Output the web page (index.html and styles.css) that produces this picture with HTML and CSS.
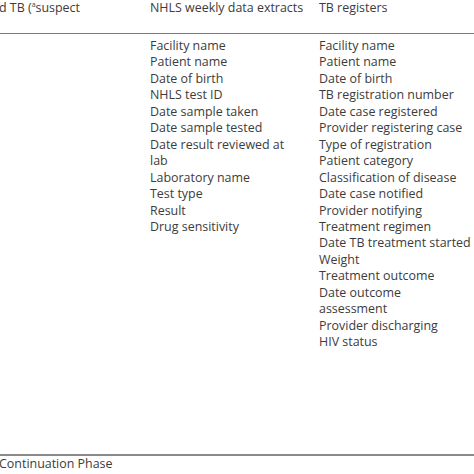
FILE: index.html
```html
<!DOCTYPE html>
<html>
<head>
<meta charset="utf-8">
<link rel="stylesheet" href="styles.css">
</head>
<body>
<div class="page">
  <div class="row head">
    <div class="cell first">d TB (<sup class="sup">a</sup>suspect</div>
    <div class="cell">NHLS weekly data extracts</div>
    <div class="cell">TB registers</div>
  </div>
  <div class="rule thin"></div>
  <div class="row body">
    <div class="cell first"></div>
    <div class="cell">
      <div class="item">Facility name</div>
      <div class="item">Patient name</div>
      <div class="item">Date of birth</div>
      <div class="item">NHLS test ID</div>
      <div class="item">Date sample taken</div>
      <div class="item">Date sample tested</div>
      <div class="item narrow">Date result reviewed at lab</div>
      <div class="item">Laboratory name</div>
      <div class="item">Test type</div>
      <div class="item">Result</div>
      <div class="item">Drug sensitivity</div>
    </div>
    <div class="cell">
      <div class="item">Facility name</div>
      <div class="item">Patient name</div>
      <div class="item">Date of birth</div>
      <div class="item">TB registration number</div>
      <div class="item">Date case registered</div>
      <div class="item">Provider registering case</div>
      <div class="item">Type of registration</div>
      <div class="item">Patient category</div>
      <div class="item">Classification of disease</div>
      <div class="item">Date case notified</div>
      <div class="item">Provider notifying</div>
      <div class="item">Treatment regimen</div>
      <div class="item">Date TB treatment started</div>
      <div class="item">Weight</div>
      <div class="item">Treatment outcome</div>
      <div class="item narrow2">Date outcome assessment</div>
      <div class="item">Provider discharging</div>
      <div class="item">HIV status</div>
    </div>
  </div>
  <div class="rule thick"></div>
  <div class="foot">Continuation Phase</div>
</div>
</body>
</html>
```

FILE: styles.css
```css
html, body {
  margin: 0;
  padding: 0;
  background: #ffffff;
}

.page {
  width: 474px;
  height: 474px;
  overflow: hidden;
  font-family: "Open Sans", "Noto Sans", sans-serif;
  font-size: 12.45px;
  line-height: 16.45px;
  color: #3c3c3c;
  display: flex;
  flex-direction: column;
}

.row {
  display: grid;
  grid-template-columns: 150px 169px 1fr;
}

.head {
  height: 33px;
  flex: none;
  line-height: 15px;
}

.first {
  margin-left: -1px;
}

.sup {
  font-size: 7px;
  line-height: 0;
  vertical-align: 5px;
}

.rule {
  flex: none;
  width: 100%;
}

.thin {
  height: 1px;
  background: #7a7a7a;
}

.thick {
  height: 2px;
  background: #8a8a8a;
}

.body {
  height: 420px;
  flex: none;
  padding-top: 4px;
  box-sizing: border-box;
}

.item {
  white-space: nowrap;
}

.narrow {
  white-space: normal;
  width: 150px;
}

.narrow2 {
  white-space: normal;
  width: 100px;
}

.foot {
  margin-left: -1px;
  flex: none;
}
```
